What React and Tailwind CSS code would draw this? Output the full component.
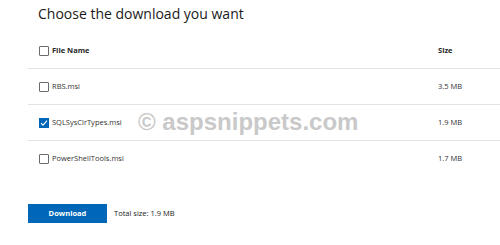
import React, { useState } from "react";

const files = [
  { id: "rbs", name: "RBS.msi", size: "3.5 MB", checked: false },
  { id: "sql", name: "SQLSysClrTypes.msi", size: "1.9 MB", checked: true },
  { id: "ps", name: "PowerShellTools.msi", size: "1.7 MB", checked: false },
];

const Box = ({ checked }) => {
  if (checked) {
    return (
      <span className="flex h-[10px] w-[10px] items-center justify-center bg-[#0067b8]">
        <svg width="8" height="8" viewBox="0 0 8 8" fill="none">
          <path d="M1 4.2 L3 6.2 L7 1.6" stroke="white" strokeWidth="1.1" />
        </svg>
      </span>
    );
  }
  return <span className="block h-[10px] w-[10px] rounded-[1px] border border-[#6b6b6b] bg-white" />;
};

const App = () => {
  const [rows] = useState(files);

  return (
    <div
      className="relative h-[245px] w-[500px] overflow-hidden bg-white pl-[28px] text-[#262626]"
      style={{ fontFamily: '"Open Sans", "Noto Sans", sans-serif' }}
    >
      <h1 className="h-[34px] pl-[10px] pt-[1px] text-[14px] leading-[26px] font-normal text-[#1a1a1a]">
        Choose the download you want
      </h1>

      <div className="flex h-[35px] items-center border-b border-[#e3e3e3] pl-[11px]">
        <Box checked={false} />
        <span className="ml-[3px] flex-1 text-[7.5px] font-bold">File Name</span>
        <span className="w-[62px] text-[7.5px] font-bold">Size</span>
      </div>

      {rows.map((file, i) => (
        <div
          key={file.id}
          className={[
            "flex h-[36px] items-center pl-[11px]",
            i < rows.length - 1 ? "border-b border-[#e3e3e3]" : "",
          ].join(" ")}
        >
          <Box checked={file.checked} />
          <span className="ml-[3px] flex-1 text-[7.5px] text-[#333]">{file.name}</span>
          <span className="w-[62px] text-[7.5px] text-[#333]">{file.size}</span>
        </div>
      ))}

      <div className="mt-[27px] flex items-center">
        <button
          type="button"
          className="flex h-[19px] w-[79px] items-center justify-center bg-[#0067b8] text-[7.5px] font-bold text-white"
        >
          Download
        </button>
        <span className="ml-[7px] text-[7.5px] text-[#1a1a1a]">Total size: 1.9 MB</span>
      </div>

      <div
        className="absolute left-[138px] top-[108px] text-[24px] font-bold leading-[28px] text-[#c9c9c9]"
        style={{ fontFamily: '"Liberation Sans", Arial, sans-serif' }}
      >
        © aspsnippets.com
      </div>
    </div>
  );
};

export default App;
